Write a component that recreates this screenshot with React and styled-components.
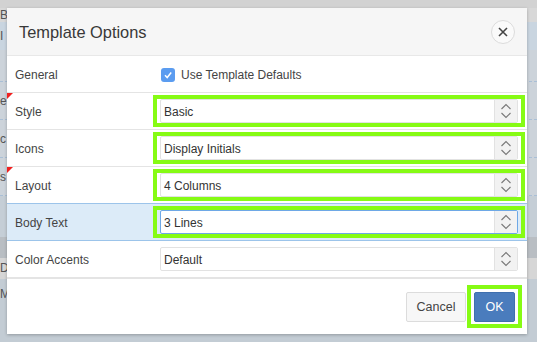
import React from "react";
import styled, { createGlobalStyle } from "styled-components";

const Global = createGlobalStyle`
  html, body { margin: 0; padding: 0; }
  body { width: 537px; height: 342px; overflow: hidden; font-family: "Liberation Sans", Arial, sans-serif; }
`;

const Page = styled.div`
  position: relative;
  width: 537px;
  height: 342px;
  background: #c3ccd4;
  overflow: hidden;
`;

const BgTop = styled.div`
  height: 8px;
  background: #d2d2d2;
`;

const BgStrip = styled.div`
  height: ${(p) => p.h}px;
  background: ${(p) => p.bg};
  border-bottom: 1px ${(p) => (p.dashed ? "dashed" : "solid")} ${(p) => p.line || "transparent"};
  font-size: 12px;
  color: #555;
  display: flex;
  align-items: center;
  white-space: nowrap;
  padding-left: 0;
`;

const Dialog = styled.div`
  position: absolute;
  left: 7px;
  top: 8px;
  width: 520px;
  height: 326px;
  background: #fff;
  box-shadow: 0 1px 3px rgba(0,0,0,0.25);
  display: flex;
  flex-direction: column;
`;

const Header = styled.div`
  height: 48px;
  background: #f6f6f6;
  border-bottom: 1px solid #e8e8e8;
  display: flex;
  align-items: center;
  justify-content: space-between;
  padding: 0 12px 0 12px;
  box-sizing: border-box;
`;

const Title = styled.div`
  font-size: 16.4px;
  color: #383838;
  padding-top: 1px;
`;

const Close = styled.div`
  width: 24px;
  height: 24px;
  border-radius: 50%;
  border: 1px solid #dcdcdc;
  background: #fafafa;
  display: flex;
  align-items: center;
  justify-content: center;
  box-sizing: border-box;
`;

const Rows = styled.div`
  display: flex;
  flex-direction: column;
`;

const Row = styled.div`
  position: relative;
  height: 37px;
  box-sizing: border-box;
  display: grid;
  grid-template-columns: 146px 1fr;
  align-items: center;
  background: ${(p) => (p.active ? "#dcebf8" : "#fff")};
  border-bottom: 1px solid ${(p) => (p.active ? "#9cc4ea" : "#e4e4e4")};
  ${(p) => p.active && "margin-top: -1px; border-top: 1px solid #9cc4ea; height: 38px;"}
`;

const Flag = styled.div`
  position: absolute;
  left: 0;
  top: 0;
  width: 0;
  height: 0;
  border-top: 6px solid #f02020;
  border-right: 6px solid transparent;
`;

const Label = styled.div`
  font-size: 12px;
  color: #444;
  padding-left: 8px;
  padding-top: 1px;
`;

const Field = styled.div`
  padding: 0 9px 0 7px;
  position: relative;
  display: flex;
  align-items: center;
  height: 100%;
`;

const Highlight = styled.div`
  position: absolute;
  left: 0;
  right: 2px;
  top: 2px;
  bottom: 2px;
  border: 4px solid #86fb14;
  pointer-events: none;
`;

const Select = styled.div`
  flex: 1;
  height: 24px;
  box-sizing: border-box;
  border: 1px solid ${(p) => (p.focus ? "#6ea8e6" : "#e2e2e2")};
  border-radius: 2px;
  background: #fff;
  display: flex;
  align-items: stretch;
  overflow: hidden;
`;

const SelectText = styled.div`
  flex: 1;
  font-size: 12px;
  color: #333;
  padding: 1px 0 0 3px;
  display: flex;
  align-items: center;
`;

const Spinner = styled.div`
  width: 22px;
  background: #f2f2f2;
  border-left: 1px solid #e2e2e2;
  display: flex;
  align-items: center;
  justify-content: center;
`;

const CheckWrap = styled.div`
  display: flex;
  align-items: center;
  gap: 6px;
  font-size: 12px;
  color: #444;
  padding-left: 1px;
  padding-top: 1px;
`;

const Box = styled.div`
  width: 14px;
  height: 14px;
  border-radius: 3px;
  background: #5b9cf0;
  display: flex;
  align-items: center;
  justify-content: center;
`;

const Footer = styled.div`
  flex: 1;
  border-top: 1px solid #e4e4e4;
  display: flex;
  justify-content: flex-end;
  align-items: center;
  gap: 8px;
  padding-right: 12px;
`;

const Button = styled.div`
  position: relative;
  height: 30px;
  box-sizing: border-box;
  width: ${(p) => (p.primary ? 41 : 60)}px;
  justify-content: center;
  display: flex;
  align-items: center;
  font-size: 12.5px;
  padding-top: 1px;
  border-radius: 2px;
  color: ${(p) => (p.primary ? "#fff" : "#444")};
  background: ${(p) => (p.primary ? "#4a7cbd" : "#f7f7f7")};
  border: 1px solid ${(p) => (p.primary ? "#3f6fae" : "#dcdcdc")};
`;

const BtnHighlight = styled.div`
  position: absolute;
  left: -8px;
  right: -8px;
  top: -8px;
  bottom: -7px;
  border: 4px solid #86fb14;
`;

const Chevrons = () => (
  <svg width="12" height="18" viewBox="0 0 12 18">
    <path d="M1.5 7 L6 2.5 L10.5 7" fill="none" stroke="#777" strokeWidth="1.1" />
    <path d="M1.5 11 L6 15.5 L10.5 11" fill="none" stroke="#777" strokeWidth="1.1" />
  </svg>
);

const rows = [
  { label: "Style", value: "Basic", flag: true, hl: true },
  { label: "Icons", value: "Display Initials", hl: true },
  { label: "Layout", value: "4 Columns", flag: true, hl: true },
  { label: "Body Text", value: "3 Lines", hl: true, active: true },
  { label: "Color Accents", value: "Default" },
];

export default function App() {
  return (
    <Page>
      <Global />
      <BgTop />
      <BgStrip h={13} bg="#d8d8d8">B</BgStrip>
      <BgStrip h={27} bg="#c9d5e0">I</BgStrip>
      <BgStrip h={31} bg="#ccd3da" dashed line="#a9bfd6" />
      <BgStrip h={37} bg="#ccd3da" dashed line="#a9bfd6">e</BgStrip>
      <BgStrip h={37} bg="#ccd3da" dashed line="#a9bfd6">c</BgStrip>
      <BgStrip h={37} bg="#ccd3da" dashed line="#a9bfd6">s</BgStrip>
      <BgStrip h={40} bg="#c5ced6" />
      <BgStrip h={20} bg="#b9bec3" />
      <BgStrip h={20} bg="#d6d6d6">D</BgStrip>
      <BgStrip h={30} bg="#c3ccd4">M</BgStrip>
      <Dialog>
        <Header>
          <Title>Template Options</Title>
          <Close>
            <svg width="10" height="10" viewBox="0 0 10 10">
              <path d="M1 1 L9 9 M9 1 L1 9" stroke="#444" strokeWidth="1.6" />
            </svg>
          </Close>
        </Header>
        <Rows>
          <Row>
            <Label>General</Label>
            <Field>
              <CheckWrap>
                <Box>
                  <svg width="10" height="10" viewBox="0 0 10 10">
                    <path d="M2 5.2 L4.2 7.5 L8.2 2.5" fill="none" stroke="#fff" strokeWidth="1.5" />
                  </svg>
                </Box>
                Use Template Defaults
              </CheckWrap>
            </Field>
          </Row>
          {rows.map((r) => (
            <Row key={r.label} active={r.active}>
              {r.flag && <Flag />}
              <Label>{r.label}</Label>
              <Field>
                <Select focus={r.active}>
                  <SelectText>{r.value}</SelectText>
                  <Spinner>
                    <Chevrons />
                  </Spinner>
                </Select>
                {r.hl && <Highlight />}
              </Field>
            </Row>
          ))}
        </Rows>
        <Footer>
          <Button>Cancel</Button>
          <Button primary>
            OK
            <BtnHighlight />
          </Button>
        </Footer>
      </Dialog>
    </Page>
  );
}
